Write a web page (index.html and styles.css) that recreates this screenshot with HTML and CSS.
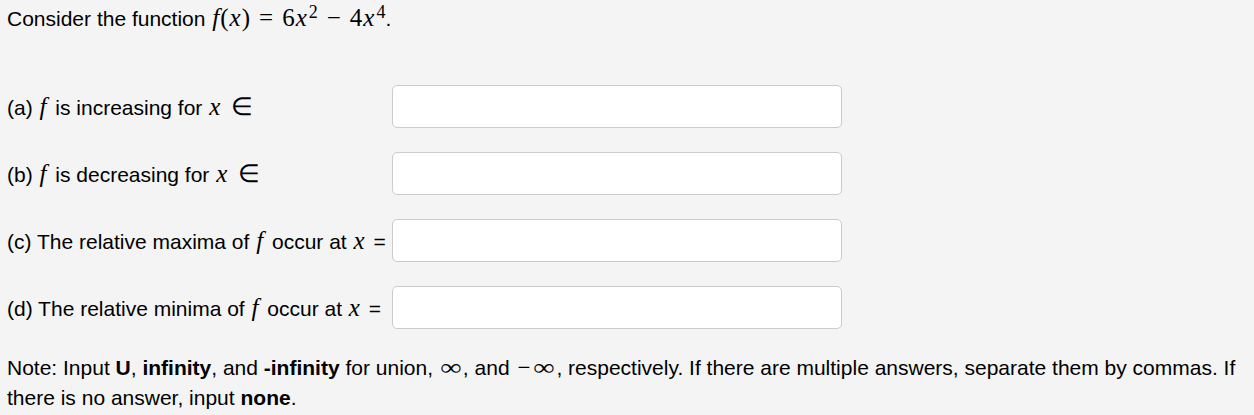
FILE: index.html
```html
<!DOCTYPE html>
<html>
<head>
<meta charset="utf-8">
<link rel="stylesheet" href="styles.css">
</head>
<body>
<div class="page">
  <p class="intro">Consider the function <span class="math"><i>f</i>(<i>x</i>)<span class="op">=</span>6<i>x</i><sup>2</sup><span class="op">−</span>4<i>x</i><sup>4</sup></span>.</p>
  <div class="rows">
    <div class="label">(a) <span class="math"><i>f</i></span> is increasing for <span class="math"><i>x</i> <span class="rel">∈</span></span></div>
    <div class="box"></div>
    <div class="label">(b) <span class="math"><i>f</i></span> is decreasing for <span class="math"><i>x</i> <span class="rel">∈</span></span></div>
    <div class="box"></div>
    <div class="label">(c) The relative maxima of <span class="math"><i>f</i></span> occur at <span class="math"><i>x</i></span> =</div>
    <div class="box"></div>
    <div class="label">(d) The relative minima of <span class="math"><i>f</i></span> occur at <span class="math"><i>x</i></span> =</div>
    <div class="box"></div>
  </div>
  <p class="note">Note: Input <b>U</b>, <b>infinity</b>, and <b>-infinity</b> for union, <span class="math"><span class="inf">∞</span></span>, and <span class="math"><span class="minus">−</span><span class="inf">∞</span></span>, respectively. If there are multiple answers, separate them by commas. If there is no answer, input <b>none</b>.</p>
</div>
</body>
</html>
```

FILE: styles.css
```css
html, body {
  margin: 0;
  padding: 0;
  background: #f4f4f4;
}
.page {
  width: 1240px;
  padding: 4px 7px 0 7px;
  font-family: "Liberation Sans", Arial, sans-serif;
  font-size: 21px;
  color: #000;
}
.intro {
  margin: 0;
  line-height: 30px;
  height: 30px;
}
.math {
  font-family: "Liberation Serif", "Times New Roman", serif;
  font-size: 25px;
  line-height: 1;
}
.math i {
  font-style: italic;
  margin: 0 1px 0 1px;
}
.label .math i {
  margin: 0 3px 0 1px;
}
.math sup {
  font-size: 18px;
  vertical-align: 8px;
  line-height: 0;
  margin-left: 1px;
}
.op {
  margin: 0 9px;
}
.rel {
  margin-left: 1px;
}
.rows {
  margin-top: 51px;
  display: grid;
  grid-template-columns: 385px 450px;
  grid-auto-rows: 43px;
  row-gap: 24px;
  align-items: center;
}
.label {
  white-space: nowrap;
}
.box {
  height: 43px;
  box-sizing: border-box;
  background: #fff;
  border: 1px solid #cbcbcb;
  border-radius: 5px;
}
.note {
  margin: 24px 0 0 0;
  line-height: 30px;
  width: 1245px;
}
.note .math {
  font-size: 23px;
}
.inf {
  display: inline-block;
  width: 24px;
  text-align: center;
  transform: scaleX(1.3);
}
.minus {
  display: inline-block;
  width: 17px;
  text-align: center;
}
```
